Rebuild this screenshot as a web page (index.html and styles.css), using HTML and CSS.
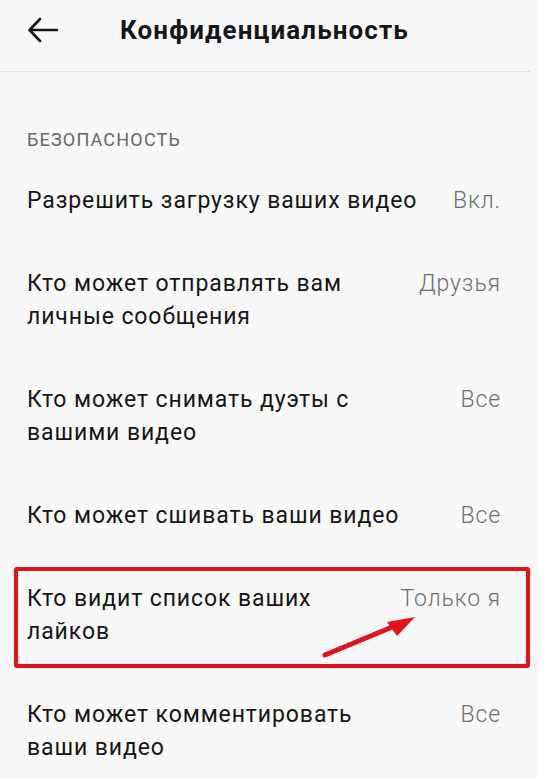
FILE: index.html
```html
<!DOCTYPE html>
<html lang="ru">
<head>
    <meta charset="UTF-8">
    <meta name="viewport" content="width=device-width, initial-scale=1.0">
    <title>Конфиденциальность</title>
    <link rel="stylesheet" href="styles.css">
</head>
<body>
    <div class="screen">
        <!-- Шапка -->
        <div class="topbar">
            <svg class="back" width="32" height="26" viewBox="0 0 32 26">
                <path d="M30 13H3M13 2L2.5 13L13 24" fill="none" stroke="#161616" stroke-width="2.6" stroke-linecap="round" stroke-linejoin="round"/>
            </svg>
            <h1>Конфиденциальность</h1>
        </div>

        <div class="section-title">БЕЗОПАСНОСТЬ</div>

        <div class="row">
            <div class="label">Разрешить загрузку ваших видео</div>
            <div class="value">Вкл.</div>
        </div>
        <div class="row">
            <div class="label">Кто может отправлять вам<br>личные сообщения</div>
            <div class="value">Друзья</div>
        </div>
        <div class="row">
            <div class="label">Кто может снимать дуэты с<br>вашими видео</div>
            <div class="value">Все</div>
        </div>
        <div class="row">
            <div class="label">Кто может сшивать ваши видео</div>
            <div class="value">Все</div>
        </div>
        <div class="row marked">
            <div class="label">Кто видит список ваших<br>лайков</div>
            <div class="value">Только я</div>
            <svg class="pointer" width="110" height="50" viewBox="0 0 110 50">
                <path d="M8 44L80 14" stroke="#e3131b" stroke-width="5" stroke-linecap="round"/>
                <path d="M98 6L70 11L80 25Z" fill="#e3131b"/>
            </svg>
        </div>
        <div class="row">
            <div class="label">Кто может комментировать<br>ваши видео</div>
            <div class="value">Все</div>
        </div>
    </div>
</body>
</html>
```

FILE: styles.css
```css
* {
    margin: 0;
    padding: 0;
    box-sizing: border-box;
}

body {
    background: #ffffff;
    font-family: Roboto, "Noto Sans", Arial, sans-serif;
    color: #161616;
}

.screen {
    width: 538px;
    height: 778px;
    overflow: hidden;
    background: #f8f8f8;
}

/* Шапка */
.topbar {
    width: 530px;
    height: 72px;
    display: flex;
    align-items: center;
    padding: 0 0 12px 27px;
    border-bottom: 1px solid #dedede;
}

.topbar .back {
    flex-shrink: 0;
}

.topbar h1 {
    margin-left: 61px;
    font-size: 26px;
    font-weight: 700;
    letter-spacing: 1.1px;
}

.section-title {
    padding: 58px 0 0 27px;
    font-size: 18px;
    line-height: 20px;
    color: #666666;
    letter-spacing: 1.2px;
}

/* Строки настроек */
.row {
    display: flex;
    justify-content: space-between;
    gap: 20px;
    padding: 25px 37px 25px 27px;
    font-size: 23px;
    line-height: 33px;
    letter-spacing: 0.9px;
}

.row:nth-child(3) {
    padding-top: 34px;
}

.label {
    white-space: nowrap;
}

.value {
    flex-shrink: 0;
    font-weight: 300;
    color: #6f6f6f;
}

.marked {
    position: relative;
}

.marked::before {
    content: "";
    position: absolute;
    left: 14px;
    top: 10px;
    width: 508px;
    height: 93px;
    border: 4px solid #e3131b;
    border-radius: 3px;
}

.marked .pointer {
    position: absolute;
    left: 317px;
    top: 54px;
}
```
